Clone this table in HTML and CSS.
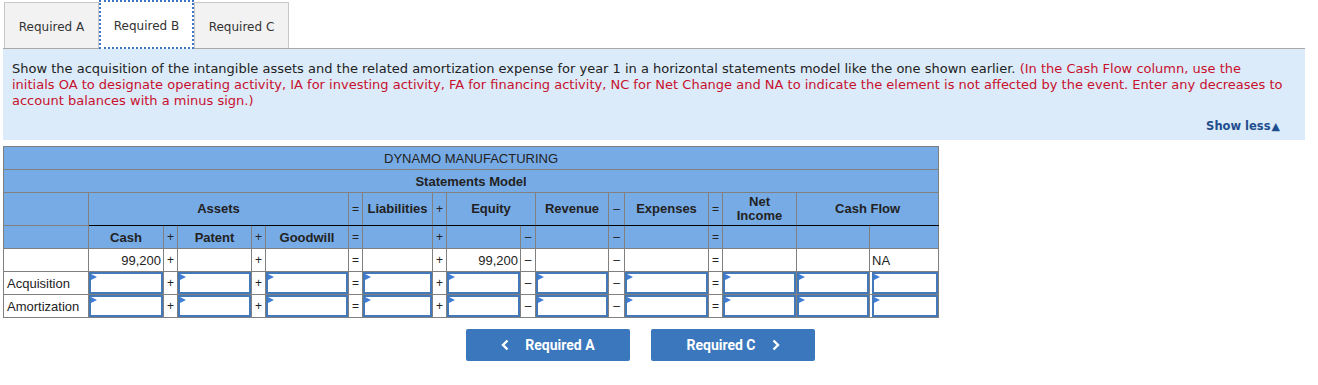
FILE: index.html
```html
<!DOCTYPE html>
<html>
<head>
<meta charset="utf-8">
<link rel="stylesheet" href="styles.css">
</head>
<body>
<div class="tabs">
  <div class="tab">Required A</div>
  <div class="tab active">Required B</div>
  <div class="tab">Required C</div>
</div>
<div class="panel">
  <p class="instr">Show the acquisition of the intangible assets and the related amortization expense for year 1 in a horizontal statements model like the one shown earlier. <span class="red">(In the Cash Flow column, use the initials OA to designate operating activity, IA for investing activity, FA for financing activity, NC for Net Change and NA to indicate the element is not affected by the event. Enter any decreases to account balances with a minus sign.)</span></p>
  <div class="showless">Show less<span class="tri">▲</span></div>
</div>
<table class="sm">
  <colgroup>
    <col class="c85"><col class="c75"><col class="c14"><col class="c74"><col class="c14"><col class="c83"><col class="c14"><col class="c70"><col class="c14"><col class="c74"><col class="c15"><col class="c73"><col class="c16"><col class="c84"><col class="c14"><col class="c74"><col class="c73"><col class="c69">
  </colgroup>
  <tr class="h1"><th colspan="18" class="title">DYNAMO MANUFACTURING</th></tr>
  <tr class="h1"><th colspan="18">Statements Model</th></tr>
  <tr class="h2">
    <th class="nb"></th>
    <th colspan="5" class="bl">Assets</th>
    <th class="sg bl">=</th>
    <th class="bl">Liabilities</th>
    <th class="sg bl">+</th>
    <th colspan="2" class="bl">Equity</th>
    <th class="bl">Revenue</th>
    <th class="sg bl">–</th>
    <th class="bl">Expenses</th>
    <th class="sg bl">=</th>
    <th class="bl ni">Net<br>Income</th>
    <th colspan="2" class="bl">Cash Flow</th>
  </tr>
  <tr class="h3">
    <th></th><th>Cash</th><th class="sg">+</th><th>Patent</th><th class="sg">+</th><th>Goodwill</th><th class="sg">=</th><th></th><th class="sg">+</th><th></th><th class="sg">–</th><th></th><th class="sg">–</th><th></th><th class="sg">=</th><th></th><th></th><th></th>
  </tr>
  <tr class="d">
    <td></td><td class="num">99,200</td><td class="sg">+</td><td></td><td class="sg">+</td><td></td><td class="sg">=</td><td></td><td class="sg">+</td><td class="num">99,200</td><td class="sg">–</td><td></td><td class="sg">–</td><td></td><td class="sg">=</td><td></td><td></td><td>NA</td>
  </tr>
  <tr class="d">
    <td class="lbl">Acquisition</td><td class="in"><div class="box"></div></td><td class="sg">+</td><td class="in"><div class="box"></div></td><td class="sg">+</td><td class="in"><div class="box"></div></td><td class="sg">=</td><td class="in"><div class="box"></div></td><td class="sg">+</td><td class="in"><div class="box"></div></td><td class="sg">–</td><td class="in"><div class="box"></div></td><td class="sg">–</td><td class="in"><div class="box"></div></td><td class="sg">=</td><td class="in"><div class="box"></div></td><td class="in"><div class="box"></div></td><td class="in"><div class="box"></div></td>
  </tr>
  <tr class="d">
    <td class="lbl">Amortization</td><td class="in"><div class="box"></div></td><td class="sg">+</td><td class="in"><div class="box"></div></td><td class="sg">+</td><td class="in"><div class="box"></div></td><td class="sg">=</td><td class="in"><div class="box"></div></td><td class="sg">+</td><td class="in"><div class="box"></div></td><td class="sg">–</td><td class="in"><div class="box"></div></td><td class="sg">–</td><td class="in"><div class="box"></div></td><td class="sg">=</td><td class="in"><div class="box"></div></td><td class="in"><div class="box"></div></td><td class="in"><div class="box"></div></td>
  </tr>
</table>
<div class="nav">
  <div class="btn"><svg class="chev" width="8" height="12" viewBox="0 0 8 12"><path d="M6.5 1.5 L2 6 L6.5 10.5" fill="none" stroke="#fff" stroke-width="2.4"/></svg>Required A</div>
  <div class="btn">Required C<svg class="chev r" width="8" height="12" viewBox="0 0 8 12"><path d="M1.5 1.5 L6 6 L1.5 10.5" fill="none" stroke="#fff" stroke-width="2.4"/></svg></div>
</div>
</body>
</html>
```
FILE: styles.css
```css
html, body { margin: 0; padding: 0; background: #fff; }
body { font-family: "DejaVu Sans", Verdana, sans-serif; color: #222; }

.tabs { display: flex; padding-left: 4px; height: 48px; align-items: flex-end; }
.tab {
  box-sizing: border-box;
  height: 46px;
  width: 95px;
  background: #f2f2f2;
  border: 1px solid #c8c8c8;
  border-bottom: none;
  font-size: 12px;
  color: #333;
  display: flex; align-items: center; justify-content: center;
  padding-top: 2px;
}
.tab.active {
  background: #fff;
  height: 49px;
  border: 2px dotted #3a74c4;
  margin-bottom: -1px;
  position: relative;
  z-index: 1;
}

.panel {
  margin-left: 3px;
  width: 1302px;
  height: 92px;
  box-sizing: border-box;
  background: #dbebf9;
  border-top: 1px solid #a9a9a9;
  padding: 12px 22px 0 9px;
  position: relative;
}
.instr { margin: 0; font-size: 13px; line-height: 16px; color: #222; }
.red { color: #c8102e; }
.showless {
  position: absolute; right: 25px; top: 70px;
  font-size: 11.5px; font-weight: bold; color: #1f4e8f;
}
.tri { font-size: 11px; margin-left: 1px; }

.sm {
  margin: 6px 0 0 3px;
  border-collapse: collapse;
  table-layout: fixed;
  width: 936px;
  font-family: "Liberation Sans", Arial, sans-serif;
  font-size: 13px;
  color: #222;
}
.sm th, .sm td { border: 1px solid #808080; padding: 0; overflow: hidden; white-space: nowrap; }
.c85 { width: 85px; } .c75 { width: 75px; } .c14 { width: 14px; } .c74 { width: 74px; }
.c83 { width: 83px; } .c70 { width: 70px; } .c15 { width: 15px; } .c73 { width: 73px; }
.c16 { width: 16px; } .c84 { width: 84px; } .c69 { width: 69px; }

.sm th { background: #77abe6; font-weight: bold; text-align: center; }
.h1 th { height: 22px; }
.h1 th.title { font-weight: normal; }
.h2 th { height: 32px; line-height: 14px; }
.h2 th.bl { border-bottom: 1px solid #000; }
.h3 th { height: 22px; }
.sg { text-align: center; font-size: 12px; font-weight: normal !important; }
.d td { height: 22px; background: #fff; }
.num { text-align: right; padding-right: 2px !important; }
.d td:last-child { padding-left: 2px; }
.lbl { padding-left: 3px !important; text-align: left; }
.in { position: relative; }
.box {
  box-sizing: border-box;
  height: 22px;
  border: 2px solid #4379b9;
  position: relative;
}
.box::before {
  content: "";
  position: absolute; left: 0; top: 0;
  border-top: 3px solid transparent;
  border-bottom: 3px solid transparent;
  border-left: 6px solid #3f7ed6;
}

.nav { display: flex; gap: 21px; margin: 11px 0 0 466px; }
.btn {
  width: 164px; height: 32px;
  background: #3a77bd;
  border-radius: 2px;
  color: #fff;
  font-family: Roboto, "Liberation Sans", sans-serif;
  font-weight: bold;
  font-size: 14px;
  display: flex; align-items: center; justify-content: center;
}
.chev { margin-right: 16px; }
.chev.r { margin-right: 0; margin-left: 16px; }
```
